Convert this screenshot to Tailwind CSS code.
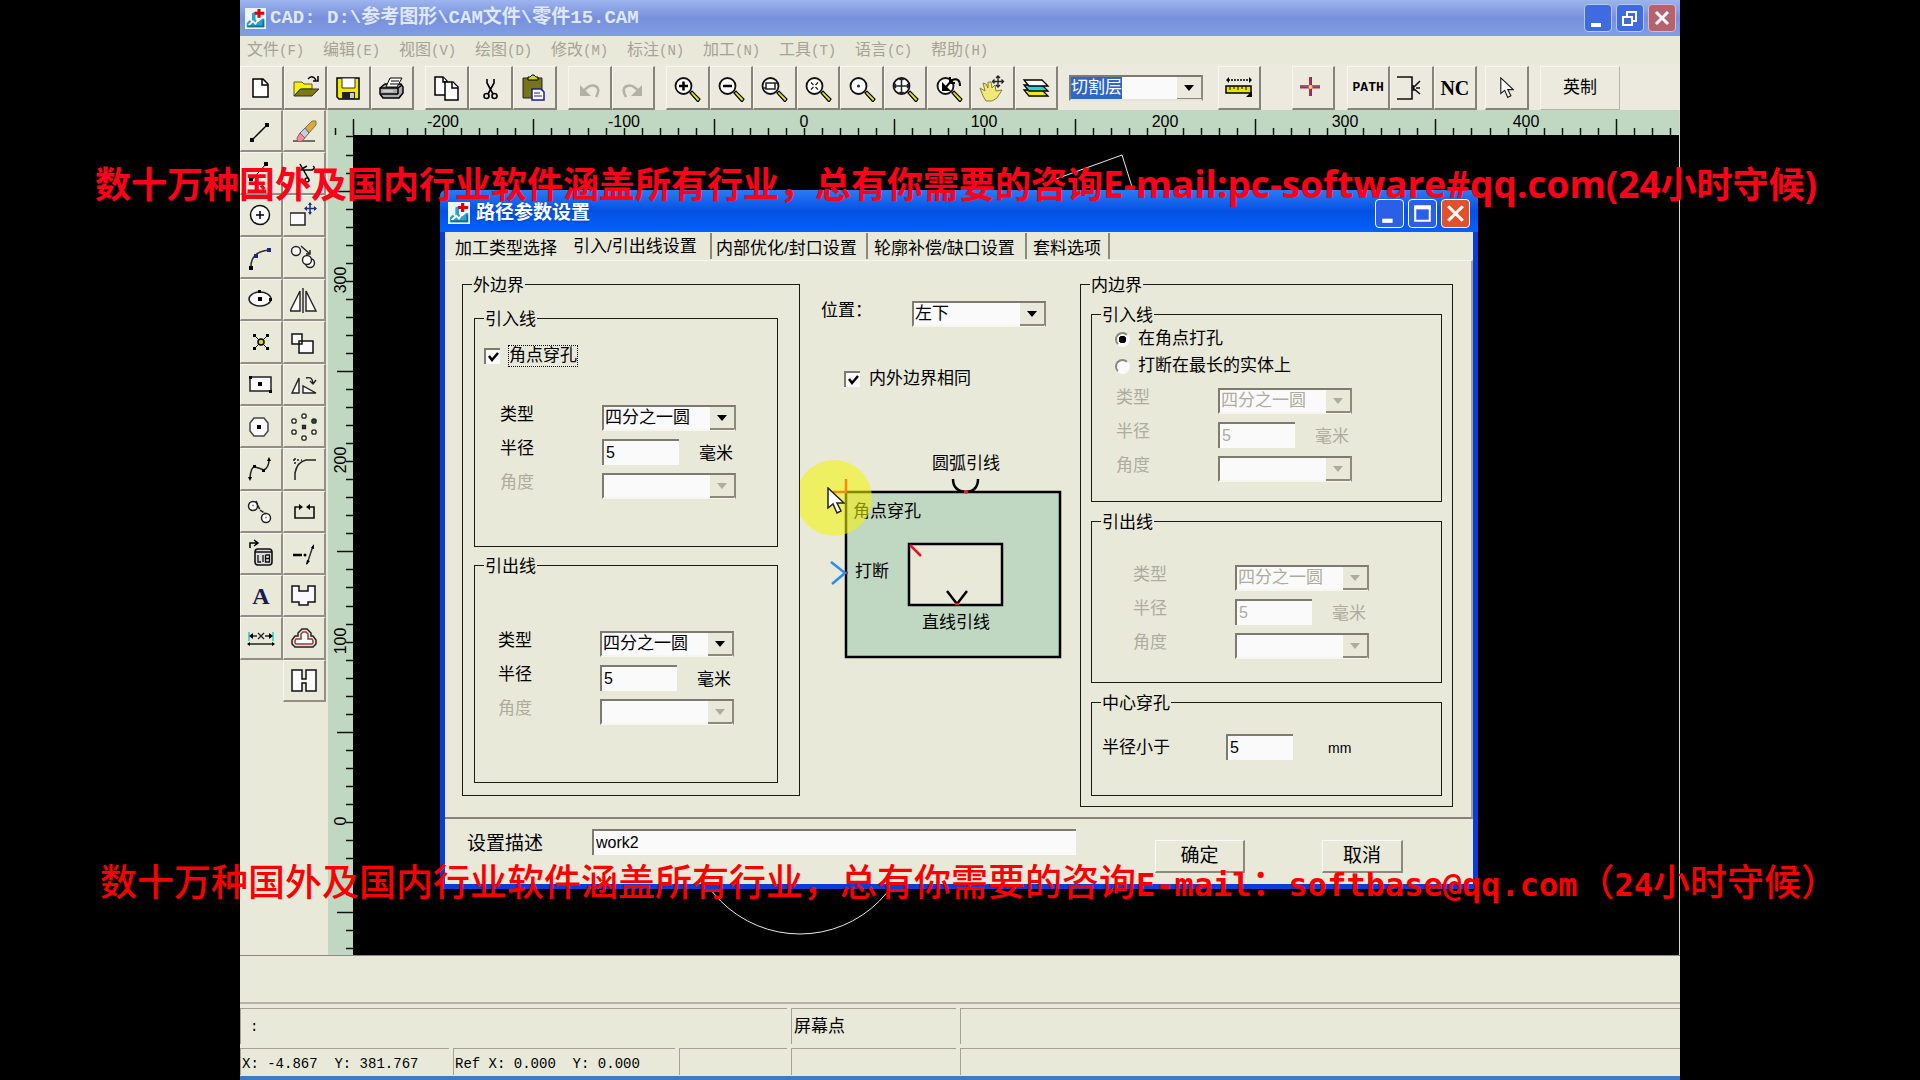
<!DOCTYPE html>
<html lang="zh-CN">
<head>
    <meta charset="UTF-8">
    <meta name="viewport" content="width=device-width, initial-scale=1.0">
    <title>CAD: D:\参考图形\CAM文件\零件15.CAM</title>
    <script src="https://cdn.jsdelivr.net/npm/@tailwindcss/browser@4"></script>
</head>
<body class="bg-black min-h-screen relative overflow-hidden font-['Liberation_Sans','Noto_Sans_CJK_SC',sans-serif] text-[17px] leading-5 text-black">

    <!-- shared symbols -->
    <svg class="hidden">
        <symbol id="lens" viewBox="0 0 28 28">
            <path d="M17 19l2-2 8 8-2 3z" fill="#e8e800" stroke="#000" stroke-width="1.2"/>
            <circle cx="10.500" cy="12" r="8" fill="#fff" stroke="#111" stroke-width="1.8"/>
        </symbol>
        <symbol id="logo" viewBox="0 0 24 24">
            <rect width="24" height="24" fill="#e8f6fa"/>
            <path d="M2 22V17l3-3 3 2V6l4-2v9l3 3 5-4h2v10z" fill="#2aa3c8"/>
            <path d="M4 20l5-5 3 3 6-9M3 9l4-3" fill="none" stroke="#fff" stroke-width="2"/>
            <path d="M3 21h19M21 14v8" stroke="#1a6c94" stroke-width="2"/>
            <path d="M16 1v10M11 6h11" stroke="#d80010" stroke-width="3.500"/>
        </symbol>
        <symbol id="pointer" viewBox="0 0 18 28">
            <path d="M1 1v20l5-4 4 9 4-2-4-8h7z" fill="#fff" stroke="#222" stroke-width="1.5"/>
        </symbol>
        <symbol id="check" viewBox="0 0 14 14">
            <path d="M3 6l3 4 6-7" fill="none" stroke="#000" stroke-width="2.500"/>
        </symbol>
        <symbol id="down" viewBox="0 0 12 8">
            <path d="M1 1h10L6 7z" fill="currentColor"/>
        </symbol>
    </svg>

    <div class="relative w-3/4 h-screen mx-auto bg-[#e9e9da] flex flex-col">
        <!-- title bar -->
        <header class="h-9 shrink-0 flex items-center gap-1 pl-[5px] pr-1 bg-linear-to-b from-[#9cb4ee] via-[#7890dc] to-[#809de2]">
            <svg class="size-[21px]"><use href="#logo"/></svg>
            <h1 class="grow font-bold text-[19px] text-[#dfe8fc] whitespace-pre font-['Liberation_Mono','Noto_Sans_CJK_SC',monospace]">CAD: D:\参考图形\CAM文件\零件15.CAM</h1>
            <button aria-label="最小化" class="size-7 rounded border border-[#b8c8f4] bg-[#3f6be0]"><svg viewBox="0 0 26 26"><path d="M6 20h10" stroke="#fff" stroke-width="4"/></svg></button>
            <button aria-label="还原" class="size-7 rounded border border-[#b8c8f4] bg-[#3f6be0]"><svg viewBox="0 0 26 26" fill="none" stroke="#fff" stroke-width="2"><path d="M6 12h9v8H6zM10 11V7h9v9h-3"/></svg></button>
            <button aria-label="关闭" class="size-7 rounded border border-[#d8b8cc] bg-[#b5626e]"><svg viewBox="0 0 26 26"><path d="M7 7l12 12M19 7L7 19" stroke="#fff" stroke-width="3"/></svg></button>
        </header>

        <nav class="h-7 shrink-0 flex items-center pl-[7px] text-base text-[#a5a393]">
            <button class="w-[76px] text-left">文件<span class="text-sm font-['Liberation_Mono',monospace]">(F)</span></button>
            <button class="w-[76px] text-left">编辑<span class="text-sm font-['Liberation_Mono',monospace]">(E)</span></button>
            <button class="w-[76px] text-left">视图<span class="text-sm font-['Liberation_Mono',monospace]">(V)</span></button>
            <button class="w-[76px] text-left">绘图<span class="text-sm font-['Liberation_Mono',monospace]">(D)</span></button>
            <button class="w-[76px] text-left">修改<span class="text-sm font-['Liberation_Mono',monospace]">(M)</span></button>
            <button class="w-[76px] text-left">标注<span class="text-sm font-['Liberation_Mono',monospace]">(N)</span></button>
            <button class="w-[76px] text-left">加工<span class="text-sm font-['Liberation_Mono',monospace]">(N)</span></button>
            <button class="w-[76px] text-left">工具<span class="text-sm font-['Liberation_Mono',monospace]">(T)</span></button>
            <button class="w-[76px] text-left">语言<span class="text-sm font-['Liberation_Mono',monospace]">(C)</span></button>
            <button class="w-[76px] text-left">帮助<span class="text-sm font-['Liberation_Mono',monospace]">(H)</span></button>
        </nav>

        <!-- toolbar -->
        <div class="h-[46px] shrink-0 flex items-center pt-[2px] bg-[#eceadf] [&_svg]:size-7 [&_svg]:shrink-0 [&_button]:flex [&_button]:h-11 [&_button]:flex-1 [&_button]:items-center [&_button]:justify-center [&_button]:border-t [&_button]:border-l [&_button]:border-r-2 [&_button]:border-b-2 [&_button]:border-t-[#f6f5ee] [&_button]:border-l-[#f6f5ee] [&_button]:border-r-[#85837a] [&_button]:border-b-[#85837a]">
            <div class="flex w-[174px]">
                <button aria-label="新建"><svg viewBox="0 0 28 28"><path d="M6 5h10l5 5v13H6z" fill="#fff" stroke="#000" stroke-width="1.5"/><path d="M15 5v6h6" fill="none" stroke="#000" stroke-width="1.5"/></svg></button>
                <button aria-label="打开"><svg viewBox="0 0 28 28"><path d="M3 22V8h8l2 2h8v5H9z" fill="#f8f400" stroke="#554" /><path d="M3 22l7-7h18l-7 7z" fill="#7c7a10" stroke="#332"/><path d="M17 5q4-5 8 1m2-4v5h-5" fill="none" stroke="#000" stroke-width="1.5"/></svg></button>
                <button aria-label="保存"><svg viewBox="0 0 28 28"><path d="M3 4h22v21H5l-2-2z" fill="#f0ec00" stroke="#000" stroke-width="1.5"/><path d="M8 4h13v10H8z" fill="#fff" stroke="#333"/><path d="M8 18h13v7H8z" fill="#222"/><path d="M16 19h4v5h-4z" fill="#ccc"/></svg></button>
                <button aria-label="打印"><svg viewBox="0 0 28 28"><path d="M2 14l5-4h16l2 3v6l-4 5H5l-3-4z" fill="#aaa" stroke="#000" stroke-width="1.500"/><path d="M8 13l4-9h12l-5 9z" fill="#fff" stroke="#000"/><path d="M13 7h8M12 10h8" stroke="#000"/><path d="M2 14h18v6M20 14l4-3M3 20h17" fill="none" stroke="#000" stroke-width="1.500"/><path d="M5 17h10" stroke="#eee"/></svg></button>
            </div>
            <div class="ml-[11px] flex w-[132px]">
                <button aria-label="复制"><svg viewBox="0 0 28 28" fill="#fff" stroke="#000" stroke-width="1.5"><path d="M2 3h8l4 4v14H2z"/><path d="M10 3v5h4"/><path d="M12 8h8l5 5v13H12z"/><path d="M19 8v6h6"/></svg></button>
                <button aria-label="剪切"><svg viewBox="0 0 28 28" fill="none" stroke="#000" stroke-width="1.6"><path d="M10 5v4l6 11M17 5v4l-6 11"/><circle cx="9.500" cy="22" r="2.500"/><circle cx="17.500" cy="22" r="2.500"/></svg></button>
                <button aria-label="粘贴"><svg viewBox="0 0 28 28"><path d="M2 4h19v20H2z" fill="#77751c" stroke="#222"/><path d="M7 6V3h2l2-2h2l2 2h2v3z" fill="#d8d428" stroke="#000"/><path d="M11 15h9l3 3v8H11z" fill="#fff" stroke="#1c18a0" stroke-width="1.5"/><path d="M13 19h6M13 22h8" stroke="#1c18a0"/></svg></button>
            </div>
            <div class="ml-[11px] flex w-[87px]">
                <button aria-label="撤销" disabled><svg viewBox="0 0 28 28" fill="none" stroke="#b3b1a5" stroke-width="2.500"><path d="M8 18Q14 10 20 12T21 23"/><path d="M5 11v11h11z" fill="#b3b1a5" stroke="none"/></svg></button>
                <button aria-label="重做" disabled><svg viewBox="0 0 28 28" fill="none" stroke="#b3b1a5" stroke-width="2.500"><path d="M20 18Q14 10 8 12T7 23"/><path d="M23 11v11H12z" fill="#b3b1a5" stroke="none"/></svg></button>
            </div>
            <div class="ml-[11px] flex w-[392px]">
                <button aria-label="放大"><svg viewBox="0 0 28 28"><use href="#lens"/><path d="M6 12h9M10.500 7.500v9" stroke="#000" stroke-width="2.500"/></svg></button>
                <button aria-label="缩小"><svg viewBox="0 0 28 28"><use href="#lens"/><path d="M6 12h9" stroke="#000" stroke-width="2.500"/></svg></button>
                <button aria-label="窗口缩放"><svg viewBox="0 0 28 28"><use href="#lens"/><path d="M6 9h9v6H6zM3 14h3M15 9h3" fill="none" stroke="#222" stroke-width="1.500"/></svg></button>
                <button aria-label="全部缩放"><svg viewBox="0 0 28 28"><use href="#lens"/><path d="M7 8.500l2.500 2.500M14 8.500L11.500 11M7 15.500L9.500 13M14 15.500L11.500 13" stroke="#222" stroke-width="1.300"/></svg></button>
                <button aria-label="中心缩放"><svg viewBox="0 0 28 28"><use href="#lens"/><circle cx="10.500" cy="12" r="1.600" fill="#333"/></svg></button>
                <button aria-label="最大缩放"><svg viewBox="0 0 28 28"><use href="#lens"/><path d="M3 12h15M10.500 4v16M5 10l-2 2 2 2M16 10l2 2-2 2M8.500 6l2-2 2 2M8.500 18l2 2 2-2" fill="none" stroke="#222" stroke-width="1.500"/></svg></button>
                <button aria-label="上次缩放"><svg viewBox="0 0 28 28"><use href="#lens"/><path d="M7 8v9h9z" fill="#000"/><path d="M11 13l6-7q8-3 8 6M15 3v6h5" fill="none" stroke="#000" stroke-width="2"/></svg></button>
                <button aria-label="平移"><svg viewBox="0 0 28 28"><path d="M2 14l5 3-2-8 3 1 2 4 0-6 3 0 1 6 3-3 1 6 6-1-5 8-5 3H8l-3-5z" fill="#f0e878" stroke="#8a8030"/><path d="M20 2v11M14.500 7.500h11M18 4l2-2 2 2M18 11l2 2 2-2M16.500 5.500l-2 2 2 2M23.500 5.500l2 2-2 2" fill="none" stroke="#222" stroke-width="1.300"/></svg></button>
                <button aria-label="图层"><svg viewBox="0 0 28 28" stroke="#000" stroke-width="1.300"><path d="M2 16h18l6 6H7z" fill="#f0ec00"/><path d="M2 11h18l6 6H7z" fill="#20d8d8"/><path d="M2 6h18l6 6H7z" fill="#fff"/></svg></button>
            </div>
            <div class="relative ml-[11px] h-[26px] w-[134px] border-2 border-t-[#7d7b6f] border-l-[#7d7b6f] border-r-[#8c8a7c] border-b-[#e6e4d8] bg-[#fafafa]">
                <label for="layer" class="sr-only">图层</label>
                <select id="layer" class="block h-[22px] appearance-none bg-[#3165c8] text-white text-[17px] leading-[22px]"><option>切割层</option></select>
                <span class="pointer-events-none absolute right-0 inset-y-0 flex w-6 items-center justify-center bg-[#eceadf] border-b border-[#8c8a7c]"><svg class="!h-2 !w-3"><use href="#down"/></svg></span>
            </div>
            <div class="ml-[15px] flex w-[43px]">
                <button aria-label="测量"><svg viewBox="0 0 28 28"><path d="M3 6h22" stroke="#000" stroke-width="1.500" stroke-dasharray="2 1"/><path d="M1 6l3-3v6zM27 6l-3-3v6z"/><path d="M1 12h25v7H1z" fill="#e8e400" stroke="#000" stroke-width="1.500"/><path d="M5 12v4M9 12v3M13 12v4M17 12v3M21 12v4" stroke="#000"/><path d="M27 17v6h-6z"/></svg></button>
            </div>
            <div class="ml-[31px] flex w-[43px]">
                <button aria-label="十字"><svg viewBox="0 0 28 28"><path d="M1 12h20" stroke="#3444b0" stroke-width="1.500"/><path d="M11 3v19M1 13.500h20" stroke="#d82030" stroke-width="2"/><path d="M12.500 3v19" stroke="#3444b0"/><circle cx="11.500" cy="13" r="2" fill="#f8d850"/></svg></button>
            </div>
            <div class="ml-3 flex w-[130px]">
                <button class="font-['Liberation_Mono',monospace] font-bold text-[13px]">PATH</button>
                <button aria-label="分支"><svg viewBox="0 0 28 28" fill="none" stroke="#111" stroke-width="1.600"><path d="M0 3h15v22H0"/><path d="M23 7l-7 7 7 6M19 14h4M16 11v5h3"/></svg></button>
                <button class="font-['Liberation_Serif',serif] font-bold text-xl">NC</button>
            </div>
            <div class="ml-2 flex w-11">
                <button aria-label="选择"><svg><use href="#pointer" x="7" y="3" width="14" height="22"/></svg></button>
            </div>
            <div class="ml-[11px] flex w-[80px]">
                <button class="!border-r !border-b !border-r-[#b5b3a6] !border-b-[#b5b3a6]">英制</button>
            </div>
        </div>

        <!-- workspace -->
        <main class="flex min-h-0 flex-1 border-b border-[#8c8a7c]">
            <aside class="w-[88px] shrink-0">
                <div class="grid h-[592px] w-[86px] grid-cols-2 grid-rows-14 [&_svg]:size-7 [&_svg]:shrink-0 [&_button]:flex [&_button]:min-h-0 [&_button]:items-center [&_button]:justify-center [&_button]:border-t [&_button]:border-l [&_button]:border-r-2 [&_button]:border-b-2 [&_button]:border-t-[#f6f5ee] [&_button]:border-l-[#f6f5ee] [&_button]:border-r-[#918f85] [&_button]:border-b-[#918f85]">
                    <button aria-label="直线"><svg viewBox="0 0 28 28"><path d="M5 23L20 8" stroke="#000" stroke-width="1.500"/><path d="M3 21h4v4H3zM18 6h4v4h-4z"/></svg></button>
                    <button aria-label="删除"><svg viewBox="0 0 28 28"><path d="M3 24h22" stroke="#444" stroke-width="1.500"/><path d="M15 11l7-7h4v4l-7 8z" fill="#e0a838" stroke="#775"/><path d="M9 17l6-6 4 5-6 7z" fill="#c8ccd8" stroke="#667"/><path d="M7 21l3-5 5 5-3 3q-5 2-5-3z" fill="#e8909c" stroke="#a55"/></svg></button>
                    <button aria-label="平行线"><svg viewBox="0 0 28 28"><path d="M4 22L19 5" stroke="#000"/><path d="M2 18h4v4H2zM17 3h4v4h-4z"/></svg></button>
                    <button aria-label="修剪"><svg viewBox="0 0 28 28" fill="none" stroke="#000" stroke-width="1.500"><path d="M10 5l8 14M17 7l-7 4h12q4-2 1-4"/><circle cx="17" cy="21" r="2"/></svg></button>
                    <button aria-label="圆"><svg viewBox="0 0 28 28"><circle cx="13" cy="14" r="9.500" fill="#fafafa" stroke="#111" stroke-width="1.500"/><path d="M9 14h8M13 10v8" stroke="#000" stroke-width="1.500"/></svg></button>
                    <button aria-label="移动"><svg viewBox="0 0 28 28"><path d="M0 12h15v12H0z" fill="#fafafa" stroke="#222" stroke-width="1.500"/><path d="M20 2v11M15 7.500h11" stroke="#223080" stroke-width="1.500"/><path d="M18 4l2-3 2 3zM18 11l2 3 2-3zM17 5l-3 2.500 3 2.500zM24 5l3 2.500-3 2.500z" fill="#223080"/></svg></button>
                    <button aria-label="圆弧"><svg viewBox="0 0 28 28"><path d="M4 25Q3 9 22 7" fill="none" stroke="#333" stroke-width="1.500"/><path d="M2 23h4v4H2z"/><path d="M7 11h4v4H7zM20 5h4v4h-4z" fill="#222288"/></svg></button>
                    <button aria-label="偏移复制"><svg viewBox="0 0 28 28" fill="#fafafa" stroke="#222" stroke-width="1.400"><circle cx="6" cy="8" r="4.500"/><circle cx="20" cy="20" r="4.500"/><circle cx="17" cy="17" r="4.500"/><path d="M11 3l9 8m0-4v4h-4" fill="none"/></svg></button>
                    <button aria-label="椭圆"><svg viewBox="0 0 28 28"><ellipse cx="13" cy="13" rx="11" ry="7" fill="#fafafa" stroke="#222" stroke-width="1.500"/><path d="M11 11h4v4h-4zM11 4h3v3h-3zM22 12h3v3h-3z"/></svg></button>
                    <button aria-label="镜像"><svg viewBox="0 0 28 28" fill="#fafafa" stroke="#222" stroke-width="1.400"><path d="M0 25L10 5v20zM26 25L16 5v20zM13 2v25"/></svg></button>
                    <button aria-label="点"><svg viewBox="0 0 28 28"><path d="M8 8l12 12M20 8L8 20" stroke="#222"/><path d="M6 6h3v3H6zM19 6h3v3h-3zM6 19h3v3H6zM19 19h3v3h-3z"/><circle cx="14" cy="14" r="3" fill="#e0dc00" stroke="#000" stroke-width="1.500"/></svg></button>
                    <button aria-label="复制图形"><svg viewBox="0 0 28 28" fill="#fafafa" stroke="#111" stroke-width="1.500"><path d="M2 6h10v10H2zM9 13h14v12H9z"/></svg></button>
                    <button aria-label="矩形"><svg viewBox="0 0 28 28"><path d="M3 7h21v14H3z" fill="#fafafa" stroke="#222" stroke-width="1.500"/><path d="M11 12h4v4h-4zM2 6h3v3H2zM22 20h3v3h-3z"/></svg></button>
                    <button aria-label="旋转"><svg viewBox="0 0 28 28" fill="#fafafa" stroke="#222" stroke-width="1.400"><path d="M2 23L9 8v15zM13 23v-7l13 7z"/><path d="M16 8q7-2 7 6m-3-3l3 3 3-4" fill="none"/></svg></button>
                    <button aria-label="多边形"><svg viewBox="0 0 28 28"><path d="M7 5h10l4 5v8l-4 5H7l-4-5v-8z" fill="#fafafa" stroke="#444" stroke-width="1.500"/><path d="M10 12h4v4h-4z"/></svg></button>
                    <button aria-label="阵列"><svg viewBox="0 0 28 28" fill="#fff" stroke="#222" stroke-width="1.300"><circle cx="14" cy="3" r="2.200"/><circle cx="24" cy="8" r="2.200" fill="#285838"/><circle cx="24" cy="19" r="2.200"/><circle cx="14" cy="25" r="2.200"/><circle cx="4" cy="19" r="2.200"/><circle cx="4" cy="8" r="2.200"/><path d="M12.500 12.500h3v3h-3z" fill="#543"/></svg></button>
                    <button aria-label="样条"><svg viewBox="0 0 28 28"><path d="M3 23Q4 11 8 12T17 15Q22 12 22 5" fill="none" stroke="#222" stroke-width="1.500"/><path d="M1 22h4l-2 4zM6 10h3v3H6zM15 14h3v3h-3zM20 6l2-4 2 4z"/></svg></button>
                    <button aria-label="圆角"><svg viewBox="0 0 28 28" fill="none" stroke="#222" stroke-width="1.500"><path d="M5 25V18Q7 7 16 5h10"/><path d="M3 5h9" stroke-dasharray="2 2"/><path d="M5 3v8" stroke-dasharray="2 2"/></svg></button>
                    <button aria-label="连接"><svg viewBox="0 0 28 28" fill="#fff" stroke="#222" stroke-width="1.500"><circle cx="6" cy="9" r="4.500"/><circle cx="19" cy="21" r="4.500"/><path d="M9 4l4 9 6 4" fill="none" stroke-dasharray="4 1"/><path d="M5.500 8.500h1M18.500 20.500h1"/></svg></button>
                    <button aria-label="打断"><svg viewBox="0 0 28 28"><path d="M10 10H5v11h19V10h-5" fill="none" stroke="#111" stroke-width="1.600"/><path d="M9 7l4 3-4 3zM20 7l-4 3 4 3z"/></svg></button>
                    <button aria-label="图库"><svg viewBox="0 0 28 28"><path d="M3 9V4h7m-3-3l4 3-4 3" fill="none" stroke="#000" stroke-width="1.500"/><rect x="8" y="10" width="17" height="16" rx="3" fill="#ddd" stroke="#111" stroke-width="1.600"/><path d="M8 13h17M11 16v7h3M16 16v7M18.500 16v7h4v-7h-4m0 3.500h4" fill="none" stroke="#111" stroke-width="1.300"/></svg></button>
                    <button aria-label="延伸"><svg viewBox="0 0 28 28"><path d="M3 16h9" stroke="#000" stroke-width="2.500"/><circle cx="15" cy="16" r="1.500"/><path d="M17 25l6-18" stroke="#333" stroke-width="1.500"/><path d="M21 9l3-4v5zM17 21l3 1-4 4z"/></svg></button>
                    <button aria-label="文字" class="font-['Liberation_Serif',serif] text-2xl font-bold text-[#1a1850]">A</button>
                    <button aria-label="轮廓"><svg viewBox="0 0 28 28"><path d="M2 4h7v5h9V4h7v16h-7v3H9v-3H2z" fill="#fafafa" stroke="#111" stroke-width="1.500"/></svg></button>
                    <button aria-label="尺寸"><svg viewBox="0 0 28 28"><path d="M2 8v9M26 8v9" stroke="#28c8d0" stroke-width="1.500"/><path d="M3 12h7M18 12h7M11 9l6 6M17 9l-6 6M1 20h26" stroke="#222" stroke-width="1.300"/><path d="M2 12l4-3v6zM26 12l-4-3v6zM0 20l3-2v4zM28 20l-3-2v4z"/></svg></button>
                    <button aria-label="偏置"><svg viewBox="0 0 28 28"><path d="M8 12V9l4-4h5l4 4v3h2l3 4v4l-3 3H5l-3-3v-4l3-4z" fill="#e8e8da" stroke="#222" stroke-width="1.500"/><path d="M11 15V10l2-2h3l2 2v5h4l1 2v2l-1 1H6l-1-1v-2l1-2z" fill="#fff" stroke="#a03838" stroke-width="1.500"/></svg></button>
                    <span></span>
                    <button aria-label="桥接"><svg viewBox="0 0 28 28"><path d="M2 4h10v9h4V4h10v21H16v-8h-4v8H2z" fill="#fafafa" stroke="#111" stroke-width="1.500"/></svg></button>
                </div>
            </aside>
            <div class="flex min-w-0 flex-1 flex-col border-r border-[#d8d6ca] bg-[#c0d8c2]">
                <svg id="rulerX" class="h-[25px] w-full shrink-0" font-size="16"></svg>
                <div class="flex min-h-0 flex-1">
                    <svg id="rulerY" class="h-full w-[25px] shrink-0 overflow-visible" font-size="16"></svg>
                    <svg class="h-full flex-1 bg-black" fill="none" stroke="#e8e8e8">
                        <path d="M700 45L769 20L780 55"/>
                        <circle cx="447" cy="687" r="112"/>
                    </svg>
                </div>
            </div>
        </main>

        <!-- status area -->
        <div class="h-12 shrink-0 border-b-2 border-[#b5b3a5]"></div>
        <footer class="shrink-0 pt-1">
            <div class="grid h-9 grid-cols-[547px_165px_1fr] gap-1 *:border-t *:border-l *:border-[#a5a396] *:px-[2px] *:flex *:items-center">
                <div><span class="pl-[7px] font-['Liberation_Mono',monospace] text-sm">:</span></div>
                <div>屏幕点</div>
                <div></div>
            </div>
            <div class="mt-1 grid h-7 grid-cols-[209px_222px_108px_165px_1fr] gap-1 pb-[1px] font-['Liberation_Mono',monospace] text-sm whitespace-pre *:border-t *:border-l *:border-[#a5a396] *:pl-[1px] *:pt-[5px]">
                <div>X: -4.867  Y: 381.767</div>
                <div>Ref X: 0.000  Y: 0.000</div>
                <div></div>
                <div></div>
                <div></div>
            </div>
            <div class="h-1 bg-[#3d7cc4]"></div>
        </footer>

        <!-- dialog -->
        <section role="dialog" aria-label="路径参数设置" class="absolute left-[200px] top-[190px] w-[1038px] rounded-t-md border-x-[5px] border-b-[5px] border-[#0c3cd8] bg-[#e9e9da]">
            <header class="-mx-[5px] flex h-[42px] items-center gap-1 rounded-t-md bg-linear-to-b from-[#2a7af4] via-[#0450e4] to-[#0462fc] pl-2 pr-2 pt-1">
                <svg class="size-[22px]"><use href="#logo"/></svg>
                <h2 class="grow pl-[2px] text-[19px] font-bold text-white text-shadow-sm">路径参数设置</h2>
                <button aria-label="最小化" class="size-[29px] rounded border border-white bg-[#2a5fe6]"><svg viewBox="0 0 26 26"><path d="M6 20h10" stroke="#fff" stroke-width="4"/></svg></button>
                <button aria-label="最大化" class="size-[29px] rounded border border-white bg-[#2a5fe6]"><svg viewBox="0 0 26 26"><path d="M6 7h14v13H6z" fill="none" stroke="#fff" stroke-width="2"/><path d="M5 7h16" stroke="#fff" stroke-width="4"/></svg></button>
                <button aria-label="关闭" class="size-[29px] rounded border border-white bg-[#e0512c]"><svg viewBox="0 0 26 26"><path d="M6 6l14 14M20 6L6 20" stroke="#fff" stroke-width="3"/></svg></button>
            </header>

            <div role="tablist" class="flex h-7 items-center *:h-[26px] *:border-r-2 *:px-2 *:whitespace-nowrap *:text-left">
                <button role="tab" class="w-[119px] border-transparent pt-[5px] pl-[10px]!">加工类型选择</button>
                <button role="tab" aria-selected="true" class="w-[148px] border-[#8b897c] pt-[1px] pl-[9px]!">引入/引出线设置</button>
                <button role="tab" class="w-[156px] border-[#8b897c] pt-[5px] pl-[4px]!">内部优化/封口设置</button>
                <button role="tab" class="w-[159px] border-[#8b897c] pt-[5px] pl-[6px]!">轮廓补偿/缺口设置</button>
                <button role="tab" class="w-[83px] border-[#8b897c] pt-[5px] pl-[6px]!">套料选项</button>
            </div>

            <div class="flex items-start border-t border-r-2 border-b-2 border-t-[#f6f5ee] border-r-[#a5a396] border-b-[#85837a] pt-[11px] pr-[18px] pb-[10px] pl-[17px]">
                <fieldset class="w-[338px] border border-[#1c1c14] pt-[10px] pr-[21px] pb-3 pl-[11px]">
                    <legend class="-ml-[2px] px-[1px] pt-1">外边界</legend>
                    <fieldset class="h-[241px] border border-[#1c1c14]">
                        <legend class="ml-[9px] px-[1px] pt-1">引入线</legend>
                        <label class="mt-[15px] ml-[9px] flex h-[22px] items-center gap-2">
                            <span class="relative size-4"><input type="checkbox" checked class="absolute inset-0 size-4 appearance-none border-t-2 border-l-2 border-[#7d7b6f] bg-[#fafafa]"><svg class="pointer-events-none absolute inset-[2px] size-[14px]"><use href="#check"/></svg></span>
                            <span class="border border-dotted border-black">角点穿孔</span>
                        </label>
                        <div class="mt-[38px] ml-[25px] grid grid-cols-[102px_134px] gap-y-2" data-fields="outer-in"></div>
                    </fieldset>
                    <fieldset class="mt-[6px] h-[230px] border border-[#1c1c14]">
                        <legend class="ml-[9px] px-[1px] pt-1">引出线</legend>
                        <div class="mt-[54px] ml-[23px] grid grid-cols-[102px_134px] gap-y-2" data-fields="outer-out"></div>
                    </fieldset>
                </fieldset>

                <div class="flex-1">
                    <div class="mt-[29px] ml-[21px] flex">
                        <label for="position" class="w-[91px]">位置：</label>
                        <div class="relative h-[26px] w-[134px] border-2 border-t-[#7d7b6f] border-l-[#7d7b6f] border-r-[#8c8a7c] border-b-[#f6f5ee] bg-[#fafafa]">
                            <select id="position" class="block h-[22px] w-full appearance-none pl-[1px] leading-[22px]"><option>左下</option></select>
                            <span class="pointer-events-none absolute -bottom-[1px] right-0 top-0 flex w-6 items-center justify-center border-b-2 border-[#8c8a7c] bg-[#e9e9da]"><svg class="h-2 w-3"><use href="#down"/></svg></span>
                        </div>
                    </div>
                    <label class="mt-[41px] ml-11 flex h-[22px] items-center gap-[9px]">
                        <span class="relative size-4"><input type="checkbox" checked class="absolute inset-0 size-4 appearance-none border-t-2 border-l-2 border-[#7d7b6f] bg-[#fafafa]"><svg class="pointer-events-none absolute inset-[2px] size-[14px]"><use href="#check"/></svg></span>
                        内外边界相同
                    </label>
                    <!-- lead-in diagram -->
                    <svg class="mt-[61px] w-[280px] h-[210px]" viewBox="0 0 280 210" font-size="17">
                        <rect x="46" y="41" width="214" height="165" fill="#c0d8c2" stroke="#000" stroke-width="2.500"/>
                        <rect x="109" y="93" width="93" height="61" fill="#e9e9da" stroke="#000" stroke-width="2.500"/>
                        <path d="M153 28q0 12 13 13q12-1 12-13M147 140l10 13 10-13" fill="none" stroke="#000" stroke-width="2.500"/>
                        <path d="M110 94l11 11M46 28v13H33M164 41h4M155 153h4M44 122h4" fill="none" stroke="#f01020" stroke-width="2.500"/>
                        <path d="M31 111l14 11-13 11" fill="none" stroke="#2a8cf0" stroke-width="2.500"/>
                        <text x="132" y="18">圆弧引线</text>
                        <text x="53" y="66">角点穿孔</text>
                        <text x="55" y="126">打断</text>
                        <text x="122" y="177">直线引线</text>
                        <circle cx="34" cy="47" r="38" fill="#f4f400" fill-opacity=".55"/>
                        <use href="#pointer" x="27" y="36" width="18" height="28"/>
                    </svg>
                </div>

                <fieldset class="flex w-[373px] flex-col gap-[7px] border border-[#1c1c14] pt-[6px] px-[10px] pb-[10px]">
                    <legend class="-ml-[1px] px-[1px] pt-1">内边界</legend>
                    <fieldset class="h-[200px] border border-[#1c1c14]">
                        <legend class="ml-[9px] px-[1px] pt-1">引入线</legend>
                        <div class="mt-[2px] ml-[23px] flex flex-col gap-[5px]">
                            <label class="flex h-[22px] items-center gap-2"><input type="radio" name="inner" checked class="size-[15px] appearance-none rounded-full border-2 border-t-[#8b897c] border-l-[#8b897c] border-r-[#fafafa] border-b-[#fafafa] bg-[#fafafa] checked:bg-radial checked:from-black checked:from-45% checked:to-[#fafafa] checked:to-50%">在角点打孔</label>
                            <label class="flex h-[22px] items-center gap-2"><input type="radio" name="inner" class="size-[15px] appearance-none rounded-full border-2 border-t-[#8b897c] border-l-[#8b897c] border-r-[#fafafa] border-b-[#fafafa] bg-[#fafafa]">打断在最长的实体上</label>
                        </div>
                        <div class="mt-[11px] ml-6 grid grid-cols-[102px_134px] gap-y-2" data-fields="inner-in"></div>
                    </fieldset>
                    <fieldset class="h-[174px] border border-[#1c1c14]">
                        <legend class="ml-[9px] px-[1px] pt-1">引出线</legend>
                        <div class="mt-[32px] ml-[41px] grid grid-cols-[102px_134px] gap-y-2" data-fields="inner-out"></div>
                    </fieldset>
                    <fieldset class="h-[106px] border border-[#1c1c14]">
                        <legend class="ml-[9px] px-[1px] pt-1">中心穿孔</legend>
                        <div class="mt-5 ml-[10px] flex items-center">
                            <label for="limit" class="w-[124px] pt-[2px]">半径小于</label>
                            <input id="limit" value="5" class="h-[26px] w-[67px] border-t-2 border-l-2 border-[#7d7b6f] bg-[#fafafa] pl-[2px] text-base">
                            <span class="ml-[35px] pt-[2px] text-sm">mm</span>
                        </div>
                    </fieldset>
                </fieldset>
            </div>

            <div class="flex items-start pt-[10px] pb-[11px] pl-[22px]">
                <label for="desc" class="w-[125px] pt-[5px] text-[19px]">设置描述</label>
                <input id="desc" value="work2" class="h-[26px] w-[484px] border-t-2 border-l-2 border-[#7d7b6f] bg-[#fafafa] pl-[2px] text-base">
                <button class="mt-[11px] ml-[79px] h-[33px] w-[90px] border-t border-l border-r-2 border-b-2 border-t-[#fafafa] border-l-[#fafafa] border-r-[#8c8a7c] border-b-[#8c8a7c] text-[19px]">确定</button>
                <button class="mt-[11px] ml-[77px] h-[33px] w-[81px] border-t border-l border-r-2 border-b-2 border-t-[#fafafa] border-l-[#fafafa] border-r-[#8c8a7c] border-b-[#8c8a7c] text-[19px]">取消</button>
            </div>
        </section>
    </div>

    <!-- banner texts over the window -->
    <p class="pointer-events-none absolute left-[95px] top-[158px] whitespace-nowrap font-['Noto_Sans_CJK_SC',sans-serif] text-4xl leading-[48px] font-bold text-[#ff0018]">数十万种国外及国内行业软件涵盖所有行业，总有你需要的咨询<span class="font-['Open_Sans',sans-serif] text-[37px]">E-mail:pc-software#qq.com(24</span>小时守候<span class="font-['Open_Sans',sans-serif] text-[37px]">)</span></p>
    <p class="pointer-events-none absolute left-[100px] top-[856px] whitespace-nowrap font-['Noto_Sans_CJK_SC',sans-serif] text-[37px] leading-[48px] font-medium text-[#fb0000]">数十万种国外及国内行业软件涵盖所有行业，总有你需要的咨询<span class="font-['DejaVu_Sans_Mono',monospace] font-bold text-[32px]">E-mail</span>：<span class="font-['DejaVu_Sans_Mono',monospace] font-bold text-[32px]">softbase@qq.com</span>（<span class="font-['DejaVu_Sans_Mono',monospace] font-bold text-[32px]">24</span>小时守候）</p>

    <script>
        // rulers: one tick per 10 units, a long one at every odd 50
        const STEP = 18.04;

        function ticks(svg, origin, length, vertical) {
            let out = '';
            for (let i = -40; i <= 60; i++) {
                const p = Math.round(origin + (vertical ? -i : i) * STEP);
                if (p < 0 || p > length) continue;
                const size = Math.abs(i % 10) === 5 ? 16 : 7;
                out += vertical
                    ? `<path d="M${25 - size} ${p}.5H25" stroke="#111" stroke-width="1.5"/>`
                    : `<path d="M${p}.5 ${25 - size}V25" stroke="#111" stroke-width="1.5"/>`;
                if (i % 10 === 0) {
                    out += vertical
                        ? `<text transform="translate(18 ${p - 1}) rotate(-90)" text-anchor="middle">${i * 10}</text>`
                        : `<text x="${p}" y="17" text-anchor="middle">${i * 10}</text>`;
                }
            }
            svg.innerHTML = out;
        }
        ticks(document.getElementById('rulerX'), 476, 1350, false);
        ticks(document.getElementById('rulerY'), 687, 820, true);

        // type / radius / angle rows shared by the four lead groups
        document.querySelectorAll('[data-fields]').forEach((box) => {
            const id = box.dataset.fields;
            const off = id.startsWith('inner');
            const dim = 'text-[#aeac9d]';
            const tone = off ? dim : 'text-black';
            const select = (name, text, disabled) => `
                <div class="relative h-[26px] w-[134px] border-2 border-t-[#7d7b6f] border-l-[#7d7b6f] border-r-[#8c8a7c] border-b-[#f6f5ee] bg-[#fafafa] ${disabled ? dim : 'text-black'}">
                    <select id="${id}-${name}" ${disabled ? 'disabled' : ''} class="block h-[22px] w-full appearance-none pl-[1px] leading-[22px] opacity-100"><option>${text}</option></select>
                    <span class="pointer-events-none absolute -bottom-[1px] right-0 top-0 flex w-6 items-center justify-center border-b-2 border-[#8c8a7c] bg-[#e9e9da]"><svg class="h-2 w-3"><use href="#down"/></svg></span>
                </div>`;
            box.innerHTML = `
                <label for="${id}-type" class="${tone}">类型</label>
                ${select('type', '四分之一圆', off)}
                <label for="${id}-radius" class="${tone}">半径</label>
                <div class="flex items-center gap-5 ${tone}">
                    <input id="${id}-radius" value="5" ${off ? 'disabled' : ''} class="h-[26px] w-[77px] border-t-2 border-l-2 border-[#7d7b6f] bg-[#fafafa] pl-[2px] text-base">
                    <span class="pt-1">毫米</span>
                </div>
                <label for="${id}-angle" class="${dim}">角度</label>
                ${select('angle', '', true)}`;
        });
    </script>
</body>
</html>
